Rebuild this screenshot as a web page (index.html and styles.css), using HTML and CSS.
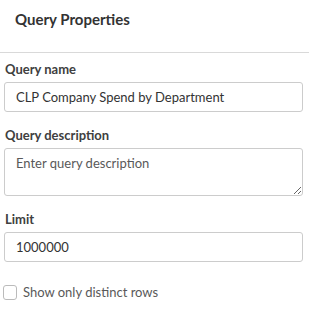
FILE: index.html
```html
<!DOCTYPE html>
<html lang="en">
<head>
	<meta charset="UTF-8">
	<title>Query Properties</title>
	<link rel="stylesheet" href="styles.css">
</head>
<body>
	<div class="panel">
		<div class="panel-header">Query Properties</div>
		<div class="panel-body">
			<div class="field">
				<label class="field-label">Query name</label>
				<input class="text-input" type="text" value="CLP Company Spend by Department">
			</div>
			<div class="field">
				<label class="field-label">Query description</label>
				<textarea class="text-area" placeholder="Enter query description"></textarea>
			</div>
			<div class="field">
				<label class="field-label">Limit</label>
				<input class="text-input" type="text" value="1000000">
			</div>
			<label class="check-row">
				<input class="check" type="checkbox">
				<span>Show only distinct rows</span>
			</label>
		</div>
	</div>
</body>
</html>
```

FILE: styles.css
```css
html, body {
	padding: 0;
	margin: 0;
	background: #fff;
}

.panel {
	font-family: Lato, "Open Sans", sans-serif;
	color: #404040;
	width: 309px;
}

.panel-header {
	height: 53px;
	box-sizing: border-box;
	padding: 10px 15px 0;
	font-size: 15px;
	font-weight: bold;
	color: #333;
	border-bottom: 1px solid #d9d9d9;
}

.panel-body {
	display: flex;
	flex-direction: column;
	padding: 8px 6px 0 4px;
}

.field {
	display: flex;
	flex-direction: column;
	margin-bottom: 15px;
}

.field-label {
	font-size: 13px;
	font-weight: bold;
	padding-left: 1px;
	margin-bottom: 5px;
}

.text-input,
.text-area {
	display: block;
	font-family: Lato, "Open Sans", sans-serif;
	font-size: 13px;
	color: #333;
	border: 1px solid #ccc;
	border-radius: 3px;
	padding: 0 11px;
	margin: 0;
	box-sizing: border-box;
	width: 299px;
	outline: none;
}

.text-input {
	height: 30px;
}

.text-area {
	height: 48px;
	padding-top: 6px;
	resize: vertical;
}

.text-area::placeholder {
	color: #595959;
}

.check-row {
	display: flex;
	align-items: center;
	gap: 6px;
	font-size: 13px;
	color: #595959;
	margin-top: 7px;
}

.check {
	appearance: none;
	width: 14px;
	height: 15px;
	margin: 0 0 0 -1px;
	border: 1px solid #bbb;
	border-radius: 3px;
	background: #fff;
}
```
